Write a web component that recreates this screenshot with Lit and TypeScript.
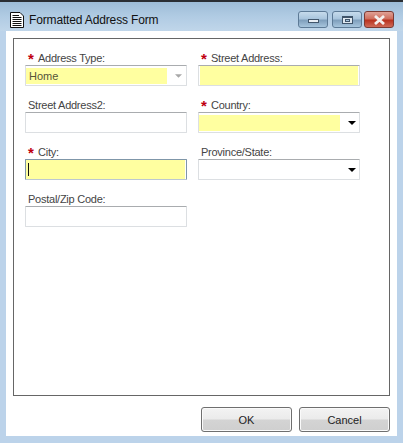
import { LitElement, html, css } from "lit";
import { customElement } from "lit/decorators.js";

const arrow = (c: string, w = 8) => html`<svg class="arrow" width=${w} height="4" viewBox="0 0 8 4"><path d="M0 0H8L4 4Z" fill=${c}></path></svg>`;

@customElement("app-root")
export class AppRoot extends LitElement {
  static styles = css`
    :host { display: block; width: 403px; height: 443px; overflow: hidden; font-family: "Liberation Sans", Arial, sans-serif; font-size: 11px; color: #222; }
    .win { box-sizing: border-box; width: 403px; height: 443px; display: flex; flex-direction: column; background: #bcd3ea; border-top: 2px solid #2a2e33; }
    .title { box-sizing: border-box; height: 29px; flex: none; display: flex; align-items: center; padding: 6px 9px 0 10px; background: linear-gradient(180deg, #9dbcd7 0, #b0cbe3 14px, #c0d6ea 29px); }
    .doc { margin-right: 5px; flex: none; }
    .title-text { flex: 1; font-size: 12px; letter-spacing: -0.15px; color: #111; padding-top: 1px; }
    .ctrls { display: flex; }
    .ctrl { box-sizing: border-box; width: 30px; height: 17px; border: 1px solid #5d7a96; border-radius: 3px; display: flex; align-items: center; justify-content: center; background: linear-gradient(180deg, #c6dbec 0, #a9c5dd 45%, #7f9fbc 55%, #a7c5dd 100%); margin-left: 4px; }
    .ctrl.close { margin-left: 2px; border-color: #7c3a33; background: linear-gradient(180deg, #e0a196 0, #cf6f5e 45%, #b9321f 55%, #cf6a58 100%); }
    .min { width: 9px; height: 2px; background: #e8eef4; border: 1px solid #41566c; margin-top: 3px; }
    .max { box-sizing: border-box; width: 11px; height: 8px; background: #dfe8f0; border: 1px solid #3f546a; border-top-width: 2px; display: flex; align-items: center; justify-content: center; }
    .max::after { content: ""; width: 5px; height: 3px; background: #a9c5dd; border: 1px solid #3f546a; box-sizing: border-box; }
    .client { flex: 1; margin: 0 6px 7px 6px; background: #fff; display: flex; flex-direction: column; padding: 7px 7px 0; min-height: 0; }
    .panel { box-sizing: border-box; height: 358px; flex: none; border: 1px solid #666; padding: 10px 29px 0 11px; display: grid; grid-template-columns: 162px 162px; column-gap: 11px; grid-auto-rows: 47px; align-content: start; }
    .field { display: flex; flex-direction: column; }
    .label { height: 16px; display: flex; align-items: center; color: #444; padding-left: 3px; line-height: 14px; padding-top: 1px; box-sizing: border-box; letter-spacing: -0.25px; }
    .star { color: #c00010; font-weight: bold; font-size: 15px; width: 10px; flex: none; margin-top: 3px; line-height: 14px; letter-spacing: 0; }
    .box { box-sizing: border-box; height: 21px; border: 1px solid #dcdfe2; border-top-color: #a9acaf; border-radius: 1px; background: #fff; display: flex; align-items: stretch; position: relative; }
    .fill { flex: 1; background: #ffffa0; display: flex; align-items: center; color: #55553a; }
    .fill.combo { flex: none; width: 141px; margin: 2px 0 1px; padding-left: 3px; box-sizing: border-box; }
    .fill.full { margin: 0 1px; }
    .fill.focus { padding-left: 2px; margin: 0 1px 0 0; }
    .spacer { flex: 1; display: flex; align-items: center; justify-content: flex-end; padding-right: 3px; }
    .spacer.dim { padding-right: 4px; }
    .box.focus { border-color: #7f96a8; border-bottom-color: #bcc8d2; }
    .caret { width: 1px; height: 13px; background: #111; }
    .arrow { display: block; }
    .footer { flex: 1; display: flex; justify-content: flex-end; gap: 7px; padding-top: 11px; align-items: flex-start; }
    .btn { box-sizing: border-box; width: 91px; height: 25px; border: 1px solid #6f6f6f; border-radius: 3px; background: linear-gradient(180deg, #f3f3f3 0, #ebebeb 48%, #d4d4d4 52%, #cfcfcf 100%); box-shadow: inset 0 0 0 1px #fafafa; font: 11px "Liberation Sans", Arial, sans-serif; color: #222; padding: 0; }
  `;

  render() {
    return html`<div class="win">
      <div class="title">
        <svg class="doc" width="14" height="16" viewBox="0 0 14 16">
          <path d="M.5.5H10L13.5 4V15.5H.5Z" fill="#fff" stroke="#111"></path>
          <path d="M2.5 3.5H9M2.5 5.5H11.5M2.5 7.5H11.5M2.5 9.5H11.5M2.5 11.5H11.5M2.5 13.5H11.5" stroke="#111"></path>
        </svg>
        <div class="title-text">Formatted Address Form</div>
        <div class="ctrls">
          <div class="ctrl"><div class="min"></div></div>
          <div class="ctrl"><div class="max"></div></div>
          <div class="ctrl close">
            <svg width="13" height="10" viewBox="0 0 13 10"><path d="M2 1 L11 9 M11 1 L2 9" stroke="#f4efee" stroke-width="2.8"></path></svg>
          </div>
        </div>
      </div>
      <div class="client">
        <div class="panel">
          <div class="field">
            <div class="label"><span class="star">*</span>Address Type:</div>
            <div class="box"><div class="fill combo">Home</div><div class="spacer dim">${arrow("#a8a8a8", 7)}</div></div>
          </div>
          <div class="field">
            <div class="label"><span class="star">*</span>Street Address:</div>
            <div class="box"><div class="fill full"></div></div>
          </div>
          <div class="field">
            <div class="label">Street Address2:</div>
            <div class="box"></div>
          </div>
          <div class="field">
            <div class="label"><span class="star">*</span>Country:</div>
            <div class="box"><div class="fill combo"></div><div class="spacer">${arrow("#000")}</div></div>
          </div>
          <div class="field">
            <div class="label"><span class="star">*</span>City:</div>
            <div class="box focus"><div class="fill focus"><div class="caret"></div></div></div>
          </div>
          <div class="field">
            <div class="label">Province/State:</div>
            <div class="box"><div class="spacer">${arrow("#000")}</div></div>
          </div>
          <div class="field">
            <div class="label">Postal/Zip Code:</div>
            <div class="box"></div>
          </div>
        </div>
        <div class="footer">
          <button class="btn">OK</button>
          <button class="btn">Cancel</button>
        </div>
      </div>
    </div>`;
  }
}
